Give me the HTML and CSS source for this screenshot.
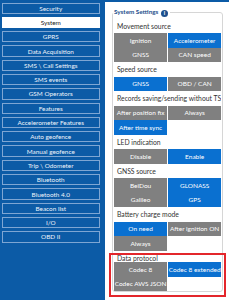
FILE: index.html
```html
<!DOCTYPE html>
<html lang="en">
<head>
  <meta charset="UTF-8" />
  <meta name="viewport" content="width=device-width, initial-scale=1.0"/>
  <title>System Settings</title>
  <link rel="stylesheet" href="styles.css">
</head>
<body>
  <div class="app">
    <nav class="menu">
      <button class="menu-item">Security</button>
      <button class="menu-item active">System</button>
      <button class="menu-item">GPRS</button>
      <button class="menu-item">Data Acquisition</button>
      <button class="menu-item">SMS \ Call Settings</button>
      <button class="menu-item">SMS events</button>
      <button class="menu-item">GSM Operators</button>
      <button class="menu-item">Features</button>
      <button class="menu-item">Accelerometer Features</button>
      <button class="menu-item">Auto geofence</button>
      <button class="menu-item">Manual geofence</button>
      <button class="menu-item">Trip \ Odometer</button>
      <button class="menu-item">Bluetooth</button>
      <button class="menu-item">Bluetooth 4.0</button>
      <button class="menu-item">Beacon list</button>
      <button class="menu-item">I/O</button>
      <button class="menu-item">OBD II</button>
    </nav>

    <main class="content">
      <fieldset class="settings">
        <legend>System Settings <span class="info">i</span></legend>

        <div class="group">
          <div class="group-title">Movement source</div>
          <div class="options">
            <button class="opt">Ignition</button>
            <button class="opt on">Accelerometer</button>
            <button class="opt">GNSS</button>
            <button class="opt">CAN speed</button>
          </div>
        </div>

        <div class="group">
          <div class="group-title">Speed source</div>
          <div class="options">
            <button class="opt on">GNSS</button>
            <button class="opt">OBD / CAN</button>
          </div>
        </div>

        <div class="group">
          <div class="group-title">Records saving/sending without TS</div>
          <div class="options">
            <button class="opt">After position fix</button>
            <button class="opt">Always</button>
            <button class="opt on">After time sync</button>
          </div>
        </div>

        <div class="group">
          <div class="group-title">LED indication</div>
          <div class="options">
            <button class="opt">Disable</button>
            <button class="opt on">Enable</button>
          </div>
        </div>

        <div class="group">
          <div class="group-title">GNSS source</div>
          <div class="options">
            <button class="opt">BeiDou</button>
            <button class="opt on">GLONASS</button>
            <button class="opt">Galileo</button>
            <button class="opt on">GPS</button>
          </div>
        </div>

        <div class="group">
          <div class="group-title">Battery charge mode</div>
          <div class="options">
            <button class="opt on">On need</button>
            <button class="opt">After ignition ON</button>
            <button class="opt">Always</button>
          </div>
        </div>

        <div class="group highlight">
          <div class="group-title">Data protocol</div>
          <div class="options">
            <button class="opt">Codec 8</button>
            <button class="opt on">Codec 8 extended</button>
            <button class="opt">Codec AWS JSON</button>
          </div>
        </div>
      </fieldset>
    </main>
  </div>
</body>
</html>
```

FILE: styles.css
```css
body {
  margin: 0;
  font-family: Lato, "Open Sans", Arial, sans-serif;
  overflow: hidden;
}
.app {
  display: flex;
  height: 300px;
  background-color: #0c5ba6;
}
.menu {
  width: 105px;
  flex: none;
  display: flex;
  flex-direction: column;
  gap: 3px;
  padding: 2.5px 0 0 2px;
  box-sizing: border-box;
}
.menu-item {
  box-sizing: border-box;
  width: 97.5px;
  height: 11.3px;
  padding: 0;
  font-family: inherit;
  font-size: 6.4px;
  line-height: 9px;
  color: #eef4fb;
  background-color: #0c5ba6;
  border: 1px solid #7ea6d3;
}
.menu-item.active {
  background-color: #fff;
  border-color: #fff;
  color: #222;
}
.content {
  flex: 1;
  margin-top: 2px;
  background-color: #fff;
  padding: 5px 7px 0 7px;
}
.settings {
  margin: 0;
  padding: 1.5px 1px 0 0;
  border: 1px solid #d6d6d6;
  border-radius: 3px;
}
.settings legend {
  padding: 0 2px 0 1px;
  margin-left: 0;
  font-size: 6.3px;
  font-weight: bold;
  color: #1d4f8c;
  line-height: 10px;
}
.info {
  display: inline-block;
  width: 7px;
  height: 7px;
  border-radius: 50%;
  background-color: #1d4f8c;
  color: #fff;
  font-size: 5.5px;
  line-height: 7px;
  text-align: center;
  vertical-align: -1px;
  margin-left: 1px;
}
.group {
  padding-left: 1px;
}
.group-title {
  height: 14.5px;
  line-height: 14.5px;
  padding-left: 3px;
  font-size: 6.8px;
  color: #333;
  white-space: nowrap;
  overflow: hidden;
}
.options {
  display: grid;
  grid-template-columns: 1fr 1fr;
  gap: 0 1px;
}
.opt {
  height: 14.5px;
  padding: 0;
  font-family: inherit;
  font-size: 6.5px;
  color: #fff;
  background-color: #808080;
  border: none;
  white-space: nowrap;
  overflow: hidden;
}
.opt.on {
  background-color: #0a70d0;
}
.highlight {
  position: relative;
}
.highlight .group-title {
  height: 11.5px;
  line-height: 15px;
}
.highlight::after {
  content: "";
  position: absolute;
  left: -4px;
  right: -5px;
  top: 2px;
  bottom: -6px;
  border: 2px solid #e3262b;
}
```
